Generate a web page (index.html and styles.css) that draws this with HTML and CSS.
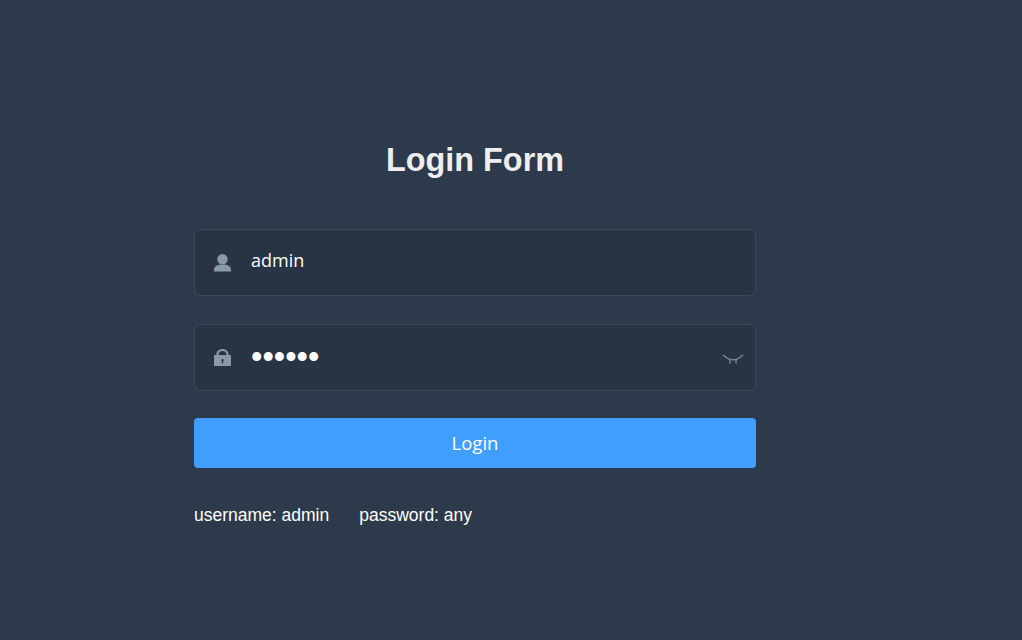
FILE: index.html
```html
<!DOCTYPE html>
<html lang="en">
<head>
<meta charset="utf-8">
<title>Login Form</title>
<link rel="stylesheet" href="styles.css">
</head>
<body>
<main class="login">
  <form class="form">
    <h1 class="title">Login Form</h1>
    <div class="field">
      <span class="icon">
        <svg width="18" height="18" viewBox="0 0 18 18"><circle cx="8.500" cy="5.200" r="5.200" fill="#889aa4"/><path d="M0 17.400V15.500C0 12.200 3.500 10.400 8.500 10.400S17 12.200 17 15.500V17.400Z" fill="#889aa4"/></svg>
      </span>
      <input class="input input-name" type="text" value="admin">
    </div>
    <div class="field">
      <span class="icon">
        <svg width="18" height="18" viewBox="0 0 18 18"><path d="M2.300 6.500V5.800C2.300 2.400 5 0 8.500 0S14.700 2.400 14.700 5.800V6.500H12.500V5.800C12.500 3.500 10.800 2.100 8.500 2.100S4.500 3.500 4.500 5.800V6.500Z" fill="#889aa4"/><path fill-rule="evenodd" d="M0 6H17V17H0ZM8.500 10A1.300 1.300 0 0 0 7.900 12.400V14.500H9.100V12.400A1.300 1.300 0 0 0 8.500 10Z" fill="#889aa4"/></svg>
      </span>
      <input class="input input-secret" type="password" value="111111">
      <span class="eye">
        <svg width="22" height="12" viewBox="0 0 22 12" fill="none" stroke="#7c8d99" stroke-width="1.300"><path d="M5 5C8 7.600 14 7.600 17 5"/><path d="M1 2L5 5M21 2L17 5M8 7V10.500M14 7V10.500"/></svg>
      </span>
    </div>
    <button class="submit" type="button"><span class="submit-label">Login</span></button>
    <div class="tips"><span class="tip">username: admin</span><span>password: any</span></div>
  </form>
</main>
</body>
</html>
```

FILE: styles.css
```css
html, body {
  margin: 0;
  height: 100%;
}

body {
  background: #2d3a4b;
  font-family: "Liberation Sans", Arial, sans-serif;
  overflow: hidden;
}

.login {
  padding: 141px 0 0 194px;
}

.form {
  width: 562px;
}

.title {
  margin: 0 0 49px;
  height: 39px;
  font-size: 32.4px;
  line-height: 39px;
  font-weight: 700;
  color: #eeeeee;
  text-align: center;
}

.field {
  display: flex;
  align-items: center;
  box-sizing: border-box;
  height: 67px;
  margin-bottom: 28px;
  background: #283443;
  border: 1px solid rgba(255, 255, 255, 0.1);
  border-radius: 6px;
}

.icon {
  display: flex;
  flex: none;
  width: 18px;
  margin: 1px 19px 0;
}

.input {
  flex: 1;
  min-width: 0;
  height: 47px;
  padding: 0;
  border: 0;
  outline: 0;
  background: transparent;
  color: #ffffff;
  font-family: "Open Sans", sans-serif;
  font-size: 18px;
}

.input-name {
  margin-top: -5px;
}

.input-secret {
  font-family: "Liberation Sans", sans-serif;
  font-size: 32.5px;
}

.eye {
  display: flex;
  flex: none;
  margin-right: 11px;
  margin-top: 2px;
}

.submit {
  display: block;
  width: 100%;
  height: 50px;
  margin: -1px 0 0;
  padding: 0 0 2px;
  border: 0;
  border-radius: 4px;
  background: #409eff;
  color: #ffffff;
  font-family: "Open Sans", sans-serif;
  font-size: 18.500px;
}

.tips {
  margin-top: 36px;
  font-size: 17.500px;
  line-height: 22px;
  color: #ffffff;
}

.tip {
  margin-right: 30px;
}
```
